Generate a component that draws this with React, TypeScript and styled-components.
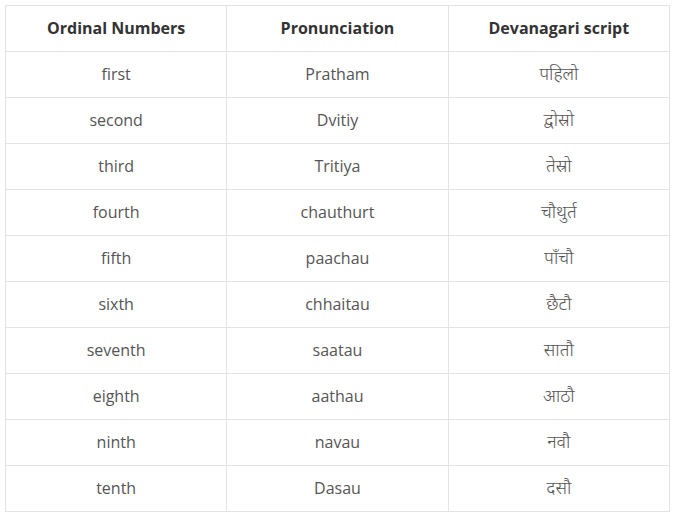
import React from "react";
import styled, { createGlobalStyle } from "styled-components";

const Global = createGlobalStyle`
  html, body { margin: 0; padding: 0; background: #fff; }
  body { font-family: "Open Sans", "Noto Sans", sans-serif; }
`;

const Wrap = styled.div`
  padding: 5px 0 0 5px;
`;

const Table = styled.table`
  border-collapse: collapse;
  width: 665px;
  table-layout: fixed;
`;

const Th = styled.th`
  border: 1px solid #e3e3e3;
  height: 44px;
  padding: 0 0 1px;
  text-align: center;
  font-family: "Open Sans", sans-serif;
  font-weight: 700;
  font-size: 16px;
  color: #333;
`;

const Td = styled.td<{ $deva?: boolean }>`
  border: 1px solid #e3e3e3;
  height: ${(p) => (p.$deva ? "43px" : "44px")};
  padding: ${(p) => (p.$deva ? "2px 0 0" : "0 0 1px")};
  text-align: center;
  font-family: ${(p) =>
    p.$deva ? `"Noto Sans Devanagari", "Noto Sans", "Open Sans", sans-serif` : `"Open Sans", sans-serif`};
  font-size: ${(p) => (p.$deva ? "18px" : "16px")};
  font-weight: ${(p) => (p.$deva ? 300 : 400)};
  color: #555;
`;

const rows: [string, string, string][] = [
  ["first", "Pratham", "पहिलो"],
  ["second", "Dvitiy", "द्वोस्रो"],
  ["third", "Tritiya", "तेस्रो"],
  ["fourth", "chauthurt", "चौथुर्त"],
  ["fifth", "paachau", "पाँचौ"],
  ["sixth", "chhaitau", "छैटौ"],
  ["seventh", "saatau", "सातौ"],
  ["eighth", "aathau", "आठौ"],
  ["ninth", "navau", "नवौ"],
  ["tenth", "Dasau", "दसौ"],
];

export default function App() {
  return (
    <>
      <Global />
      <Wrap>
        <Table>
          <thead>
            <tr>
              <Th>Ordinal Numbers</Th>
              <Th>Pronunciation</Th>
              <Th>Devanagari script</Th>
            </tr>
          </thead>
          <tbody>
            {rows.map((r) => (
              <tr key={r[0]}>
                <Td>{r[0]}</Td>
                <Td>{r[1]}</Td>
                <Td $deva>{r[2]}</Td>
              </tr>
            ))}
          </tbody>
        </Table>
      </Wrap>
    </>
  );
}
